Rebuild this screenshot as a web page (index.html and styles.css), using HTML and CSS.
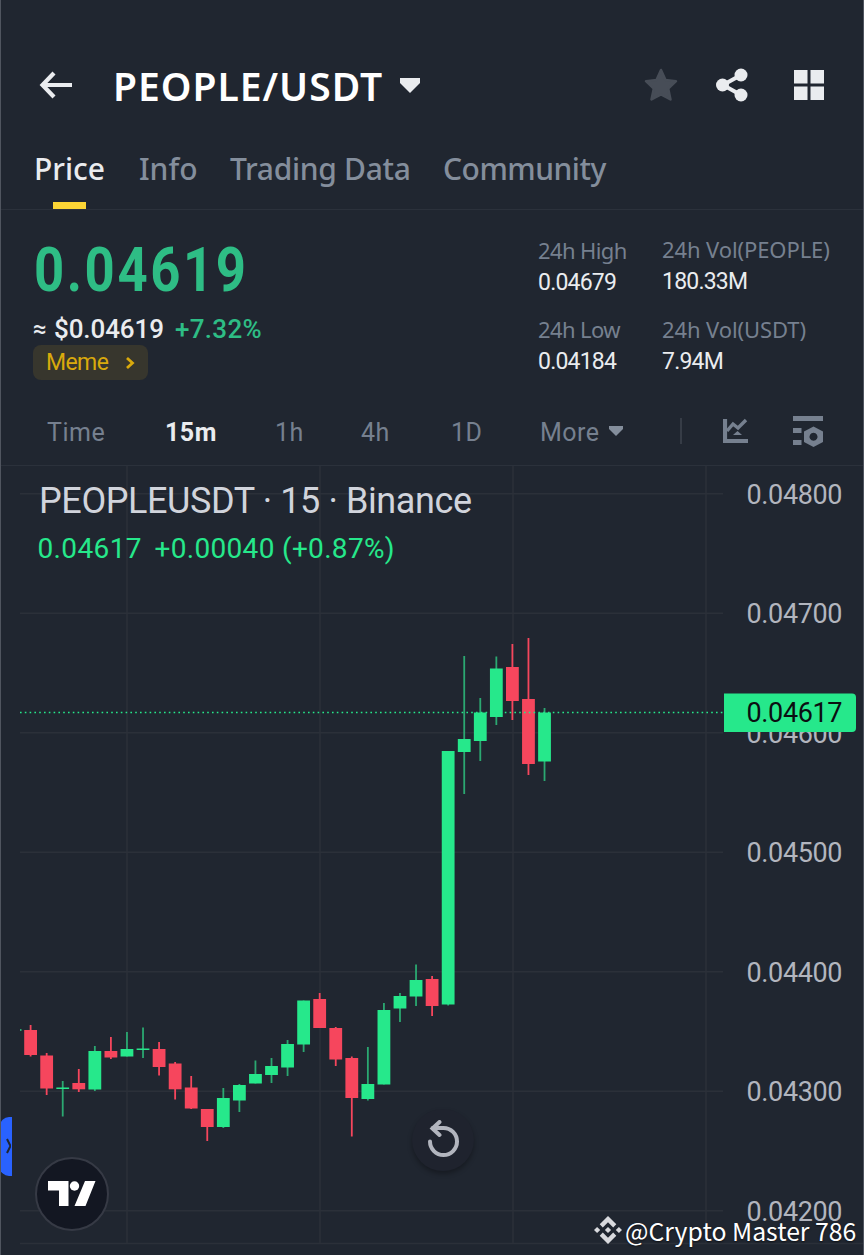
FILE: index.html
```html
<!DOCTYPE html>
<html lang="en">
	<head>
		<meta charset="UTF-8" />
		<meta name="viewport" content="width=device-width, initial-scale=1.0" />
		<title>PEOPLE/USDT</title>
		<link rel="stylesheet" href="styles.css">
	</head>
	<body>
		<div class="screen">
			<header class="header">
				<svg class="back" width="34" height="28" viewBox="0 0 34 28">
					<path d="M15 2 3.500 14 15 26M4 14h29" fill="none" stroke="#eaecef" stroke-width="4.200" />
				</svg>
				<h1>PEOPLE/USDT</h1>
				<svg class="caret" width="22" height="17" viewBox="0 0 22 17">
					<path d="M1 1h20v5L11 16 1 6z" fill="#eaecef" />
				</svg>
				<svg class="star" width="34" height="34" viewBox="0 0 34 34">
					<path d="M17 2l4.500 10 10.500 1.200-7.800 7.300L26.500 31.500 17 26.500 7.500 31.500l2.300-11L2 13.200 12.500 12z" fill="#474d57" stroke="#474d57" stroke-width="2.500" stroke-linejoin="round" />
				</svg>
				<svg class="share" width="32" height="34" viewBox="0 0 32 34">
					<path d="M25 7 7 17l18 10" fill="none" stroke="#eaecef" stroke-width="4" />
					<circle cx="25" cy="7" r="6.500" fill="#eaecef" />
					<circle cx="6.500" cy="17" r="6.500" fill="#eaecef" />
					<circle cx="25" cy="27" r="6.500" fill="#eaecef" />
				</svg>
				<svg class="grid" width="30" height="30" viewBox="0 0 30 30">
					<path d="M0 0h13.500v13.500H0zM16.500 0H30v13.500H16.500zM0 16.500h13.500V30H0zM16.500 16.500H30V30H16.500z" fill="#eaecef" />
				</svg>
			</header>

			<nav class="tabs">
				<span class="tab active">Price</span>
				<span class="tab info">Info</span>
				<span class="tab trading">Trading Data</span>
				<span class="tab community">Community</span>
			</nav>

			<section class="summary">
				<div class="price">
					<div class="last">0.04619</div>
					<div class="fiat">
						<span class="approx">≈</span>
						<span class="usd">$0.04619</span>
						<span class="change">+7.32%</span>
					</div>
					<div class="tag">
						<span>Meme</span>
						<svg width="10" height="14" viewBox="0 0 10 14">
							<path d="M2 2l5.500 5L2 12" fill="none" stroke="#d9a90c" stroke-width="2.800" />
						</svg>
					</div>
				</div>
				<dl class="stats">
					<div class="high">
						<dt>24h High</dt>
						<dd>0.04679</dd>
					</div>
					<div>
						<dt>24h Vol(PEOPLE)</dt>
						<dd>180.33M</dd>
					</div>
					<div class="low">
						<dt>24h Low</dt>
						<dd>0.04184</dd>
					</div>
					<div>
						<dt>24h Vol(USDT)</dt>
						<dd>7.94M</dd>
					</div>
				</dl>
			</section>

			<div class="intervals">
				<span class="time">Time</span>
				<span class="m15">15m</span>
				<span class="h1">1h</span>
				<span class="h4">4h</span>
				<span class="d1">1D</span>
				<span class="more">More</span>
				<svg class="more-caret" width="14" height="12" viewBox="0 0 14 12">
					<path d="M0 1h14v3L7 11 0 4z" fill="#848e9c" />
				</svg>
				<i class="separator"></i>
				<svg class="line-icon" width="26" height="26" viewBox="0 0 26 26">
					<path d="M2 1v22h23" fill="none" stroke="#76808f" stroke-width="4.200" />
					<path d="M4 13l6-7 5 4 8-8" fill="none" stroke="#76808f" stroke-width="3.400" />
					<path d="M10 17l4.500-4 4.500 4z" fill="#76808f" />
				</svg>
				<svg class="settings-icon" width="32" height="34" viewBox="0 0 32 34">
					<path d="M1 1h30v5H1zM1 13h8.500v5H1zM1 25h8.500v5H1z" fill="#76808f" />
					<path fill-rule="evenodd" d="M21.500 11.500l9.500 5v10.500l-9.500 5-9.500-5V16.500zM21.500 17.700a4 4 0 1 0 .01 0z" fill="#76808f" />
				</svg>
			</div>

			<main class="chart">
				<svg id="chart" width="862" height="789" viewBox="1 466 862 789">
					<g id="gridLines"></g>
					<g id="axis"></g>
					<g id="candles"></g>
					<path class="last-line" d="M20 712.500H723" />
					<path class="last-label" d="M724 693.500H852a4 4 0 0 1 4 4V728a4 4 0 0 1-4 4H724z" />
					<text class="last-text" x="746.500" y="722" textLength="96">0.04617</text>
					<text class="symbol" x="39" y="512.500" textLength="433">PEOPLEUSDT · 15 · Binance</text>
					<text class="quote" x="37.500" y="558" textLength="104">0.04617</text>
					<text class="quote" x="154.500" y="558" textLength="240">+0.00040 (+0.87%)</text>
				</svg>
				<div class="drawer">
					<svg width="11" height="58" viewBox="0 0 11 58">
						<path d="M7 22l3.500 7L7 36" fill="none" stroke="#202630" stroke-width="2" />
					</svg>
				</div>
				<div class="logo">
					<svg width="48" height="26" viewBox="0 0 48 26">
						<path d="M0 0h20.500v25H11V9.500H0zM37 0h10.500L37.500 25H26.500z" fill="#fff" />
						<circle cx="26.500" cy="5" r="4.700" fill="#fff" />
					</svg>
				</div>
				<div class="reset">
					<svg width="34" height="40" viewBox="0 0 34 40">
						<path d="M4 21.500a13.500 13.500 0 1 0 13.500-13.500H6.500M13.500 2 6.500 8.500l7 6.500" fill="none" stroke="#b2b5be" stroke-width="4" stroke-linecap="round" />
					</svg>
				</div>
				<div class="watermark">
					<svg width="28" height="28" viewBox="0 0 28 28">
						<path d="M14 0l8.300 8.300-3.100 3.100L14 6.200l-5.200 5.200-3.100-3.100zM14 28l-8.300-8.300 3.100-3.100 5.200 5.200 5.200-5.200 3.100 3.100zM14 10.900l3.100 3.100-3.100 3.100-3.100-3.100zM3.100 10.900L6.200 14l-3.100 3.100L0 14zM24.900 10.900L28 14l-3.100 3.100-3.100-3.100z" fill="#d9dade" />
					</svg>
					<span>@Crypto Master 786</span>
				</div>
			</main>
		</div>

		<script src="chart.js"></script>
	</body>
</html>
```

FILE: styles.css
```css
body {
	margin: 0;
	background-color: #202630;
	color: #eaecef;
	font-family: Roboto, sans-serif;
}
.screen {
	box-sizing: border-box;
	width: 864px;
	height: 1255px;
	overflow: hidden;
	border-left: 1px solid #50555f;
	border-right: 1px solid #50555f;
}
svg {
	display: block;
	flex: none;
}
span {
	white-space: nowrap;
}

/* header */
.header {
	display: flex;
	align-items: center;
	height: 70px;
	padding: 50px 39px 1px 38px;
}
h1 {
	width: 269px;
	margin: 0 0 0 40px;
	color: #fff;
	font-family: "Noto Sans", sans-serif;
	font-size: 39px;
	font-weight: 600;
	line-height: 70px;
	letter-spacing: 1px;
	padding-top: 2px;
}
.caret {
	margin-left: 17px;
}
.star {
	margin-left: auto;
}
.share {
	margin-left: 38px;
}
.grid {
	margin-left: 46px;
}

/* tabs */
.tabs {
	display: flex;
	height: 88px;
	padding-left: 33px;
	border-bottom: 1px solid #2b313b;
	color: #848e9c;
	font-family: "Noto Sans", sans-serif;
	font-size: 30px;
	font-weight: 500;
	line-height: 96px;
}
.tab {
	position: relative;
}
.active {
	width: 105px;
	color: #eaecef;
}
.active::after {
	content: "";
	position: absolute;
	left: 19px;
	bottom: 0;
	width: 33px;
	height: 7px;
	background-color: #fcd535;
}
.info {
	width: 91px;
}
.trading {
	width: 213px;
	letter-spacing: -0.3px;
}
.community {
	letter-spacing: -0.5px;
}

/* price and 24h stats */
.summary {
	display: flex;
	height: 190px;
}
.price {
	width: 505px;
	padding-left: 32px;
}
.last {
	height: 104px;
	color: #2ebd85;
	font-size: 62px;
	font-weight: 700;
	line-height: 119px;
	letter-spacing: 3px;
	transform: translateX(1px) scaleX(0.85);
	transform-origin: left;
}
.fiat {
	display: flex;
	height: 31px;
	font-size: 26px;
	font-weight: 500;
	line-height: 30px;
}
.approx {
	width: 21px;
	font-size: 24px;
}
.usd {
	width: 121px;
	letter-spacing: -0.1px;
}
.change {
	color: #2ebd85;
	letter-spacing: 0.3px;
}
.tag {
	display: flex;
	align-items: center;
	box-sizing: border-box;
	width: 115px;
	height: 35px;
	padding-left: 13px;
	border-radius: 8px;
	background-color: #37362d;
	color: #d9a90c;
	font-size: 23px;
}
.tag span {
	width: 79px;
	letter-spacing: -0.6px;
}
.stats {
	display: grid;
	grid-template-columns: 124px 180px;
	grid-template-rows: 80px 80px;
	margin: 24px 0 0;
}
.high {
	padding-top: 1px;
}
.high dt,
.low dt {
	letter-spacing: -0.6px;
}
dt {
	color: #76808f;
	font-family: "Noto Sans", sans-serif;
	font-size: 22px;
	line-height: 30px;
	letter-spacing: -0.1px;
	white-space: nowrap;
}
dd {
	margin: 0;
	font-size: 23px;
	line-height: 35px;
	letter-spacing: -0.8px;
}

/* interval bar */
.intervals {
	display: flex;
	align-items: center;
	height: 65px;
	padding-left: 46px;
	border-bottom: 1px solid #2b313b;
	color: #76808f;
	font-size: 25px;
	line-height: 66px;
	letter-spacing: 0.5px;
}
.time {
	width: 118px;
}
.m15 {
	width: 110px;
	color: #eaecef;
	font-weight: 700;
}
.h1 {
	width: 86px;
}
.h4 {
	width: 90px;
}
.d1 {
	width: 89px;
}
.more {
	width: 69px;
}
.more-caret {
	margin-bottom: 4px;
}
.separator {
	width: 2px;
	height: 26px;
	margin: 0 0 4px 57px;
	background-color: #363c46;
}
.line-icon {
	margin: 0 0 3px 41px;
}
.settings-icon {
	margin: 0 0 1px 43px;
}

/* chart */
.chart {
	position: relative;
	height: 789px;
}
.grid-line {
	stroke: #2b3039;
	stroke-width: 1.5;
}
.axis-text,
.last-text {
	fill: #b2b5be;
	font-size: 27px;
}
.up {
	fill: #26e88b;
}
.down {
	fill: #f6465d;
}
.up-wick {
	fill: #2ba871;
}
.last-line {
	stroke: #26e88b;
	stroke-width: 1.5;
	stroke-dasharray: 1.6 3.2;
}
.last-label {
	fill: #26e88b;
}
.last-text {
	fill: #0b0e11;
}
.symbol {
	fill: #d1d4dc;
	font-size: 36px;
}
.quote {
	fill: #26e88b;
	font-size: 28px;
}
.drawer {
	position: absolute;
	left: -1px;
	top: 651px;
	width: 12px;
	height: 59px;
	border-radius: 9px 0 0 9px;
	background-color: #2962ff;
}
.logo {
	position: absolute;
	left: 34px;
	top: 691px;
	display: flex;
	align-items: center;
	justify-content: center;
	box-sizing: border-box;
	width: 74px;
	height: 74px;
	border: 2px solid #363a45;
	border-radius: 50%;
	background-color: #131722;
}
.reset {
	position: absolute;
	left: 411px;
	top: 643px;
	display: flex;
	align-items: center;
	justify-content: center;
	width: 62px;
	height: 62px;
	border-radius: 50%;
	background-color: #1f232e;
	box-shadow: 0 3px 5px rgba(0, 0, 0, 0.3);
}
.watermark {
	position: absolute;
	left: 593px;
	top: 746px;
	display: flex;
	align-items: center;
	gap: 3px;
	color: #fff;
	font-family: "Noto Sans CJK SC", sans-serif;
	font-size: 24.8px;
	line-height: 36px;
	text-shadow: 0 1px 2px rgba(0, 0, 0, 0.6);
}
```

FILE: chart.js
```js
const NS = "http://www.w3.org/2000/svg";

// [direction, high, body top, body bottom, low]
const candles = [
	["down", 1025, 1030, 1055, 1056.5],
	["down", 1053, 1055.5, 1088.5, 1095],
	["up", 1081, 1087.5, 1089, 1116.5],
	["down", 1069, 1083, 1089.3, 1092],
	["up", 1046, 1051, 1089.5, 1091],
	["down", 1037, 1051, 1057.5, 1059],
	["up", 1032, 1049, 1056.5, 1056.5],
	["up", 1027.5, 1048.5, 1050, 1058],
	["down", 1042, 1049, 1067, 1075.5],
	["down", 1062, 1063.5, 1089.3, 1099.5],
	["down", 1076, 1087.5, 1108.5, 1109],
	["down", 1109, 1109, 1127, 1141],
	["up", 1088, 1098, 1127, 1128],
	["up", 1084, 1085, 1100.5, 1112],
	["up", 1060.5, 1074, 1083.5, 1083.5],
	["up", 1058, 1066, 1075, 1083],
	["up", 1040, 1044, 1067.5, 1076],
	["up", 1000.5, 1000.5, 1044.5, 1052],
	["down", 993, 999, 1028, 1028],
	["down", 1027, 1028, 1059.5, 1066],
	["down", 1056.5, 1058, 1098, 1136.5],
	["up", 1047, 1084, 1099, 1100.5],
	["up", 1003, 1010, 1084.5, 1084.5],
	["up", 993, 996, 1008.5, 1022],
	["up", 964.5, 980, 996.5, 1006],
	["down", 976, 979, 1006, 1016],
	["up", 751, 751, 1004.5, 1005.5],
	["up", 656, 739, 752, 794],
	["up", 698, 712.5, 741, 761],
	["up", 656.5, 668.5, 717, 725],
	["down", 644, 667, 701, 720],
	["down", 638, 699, 764, 775],
	["up", 708, 712.5, 761.5, 781],
];

const add = (parent, name, attrs, text) => {
	const el = document.createElementNS(NS, name);
	for (const key in attrs) el.setAttribute(key, attrs[key]);
	if (text) el.textContent = text;
	document.getElementById(parent).appendChild(el);
};

const line = (x1, y1, x2, y2) =>
	add("gridLines", "line", { x1, y1, x2, y2, class: "grid-line" });

[127, 320, 513, 706].forEach((x) => line(x, 466, x, 1243));
line(20, 1243.5, 863, 1243.5);

["0.04800", "0.04700", "0.04600", "0.04500", "0.04400", "0.04300", "0.04200"].forEach(
	(price, i) => {
		const y = 493.7 + i * 119.5;
		line(20, y, 723, y);
		add("axis", "text", { x: 746.5, y: y + 10, textLength: 96, class: "axis-text" }, price);
	}
);

add("candles", "rect", { x: 20, y: 1029, width: 1.5, height: 2, class: "up-wick" });
candles.forEach(([dir, high, top, bottom, low], i) => {
	const x = 30.6 + i * 16.06;
	const wick = dir === "up" ? "up-wick" : "down";
	add("candles", "rect", { x: x - 0.9, y: high, width: 1.8, height: low - high, class: wick });
	add("candles", "rect", { x: x - 6.4, y: top, width: 12.8, height: bottom - top, class: dir });
});
```
